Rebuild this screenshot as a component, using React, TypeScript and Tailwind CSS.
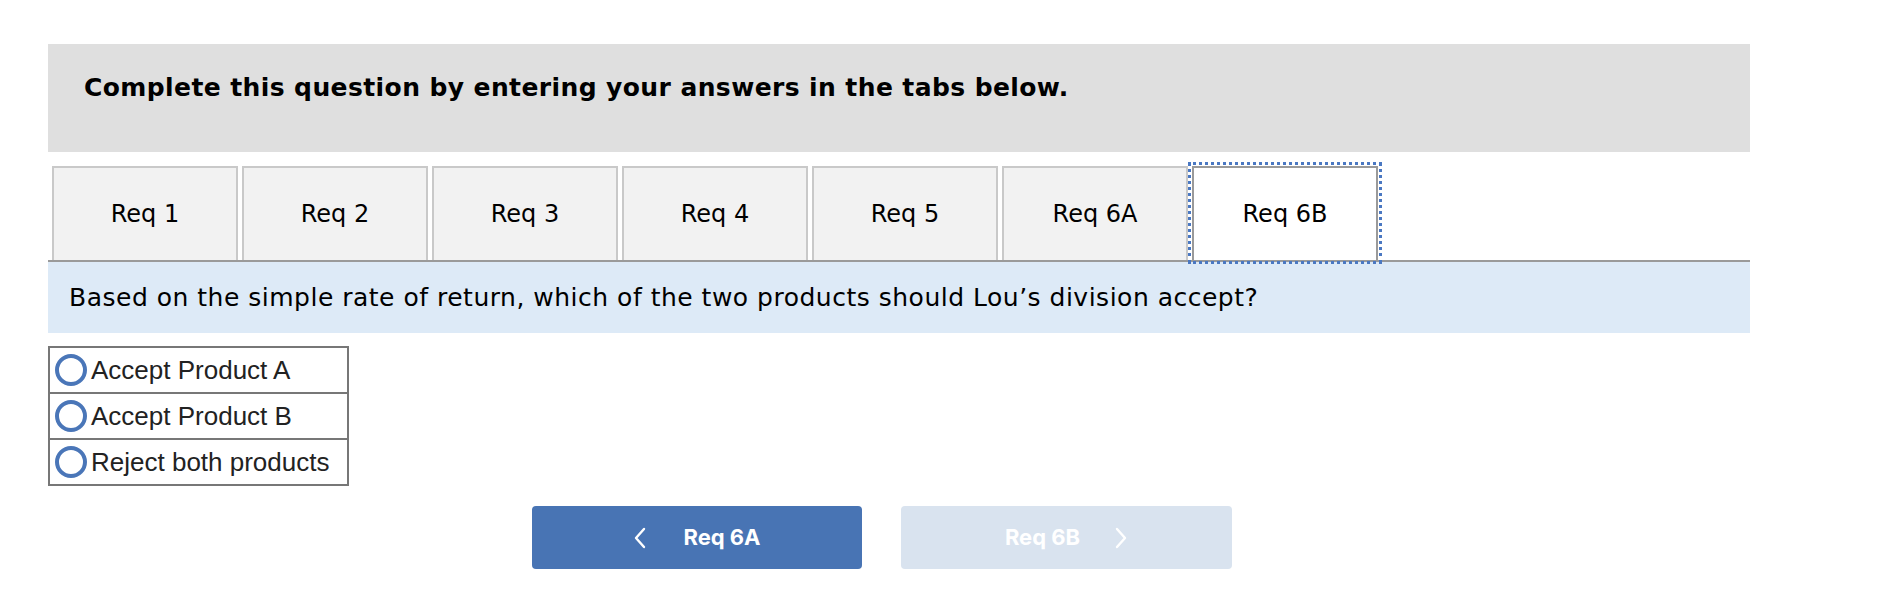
import { useState } from 'react'

const tabs = ['Req 1', 'Req 2', 'Req 3', 'Req 4', 'Req 5', 'Req 6A', 'Req 6B']

const options = ['Accept Product A', 'Accept Product B', 'Reject both products']

export default function App() {
  const [active, setActive] = useState('Req 6B')
  const [choice, setChoice] = useState<string | null>(null)

  return (
    <div className="min-h-[600px] bg-white pt-[44px] px-[48px]" style={{ width: 1892 }}>
      <div className="w-[1702px]">
        {/* Instructions */}
        <div className="h-[108px] bg-[#dfdfdf] pt-[25px] pl-[36px]">
          <p className="text-[25px] font-bold tracking-[0.4px] text-black" style={{ fontFamily: '"DejaVu Sans", Verdana, sans-serif' }}>
            Complete this question by entering your answers in the tabs below.
          </p>
        </div>

        {/* Tabs */}
        <div className="mt-[14px] flex gap-[4px] pl-[4px] border-b-2 border-[#9a9a9a]">
          {tabs.map((t) => (
            <button
              key={t}
              onClick={() => setActive(t)}
              className={`w-[186px] h-[94px] border-2 border-b-0 flex items-center justify-center text-[24px] text-black ${
                active === t
                  ? 'bg-white border-[#9a9a9a] outline-[3px] outline-dotted outline-offset-1 outline-[#4a78c2] relative z-10'
                  : 'bg-[#f2f2f2] border-[#c9c9c9]'
              }`}
              style={{ fontFamily: '"DejaVu Sans", Verdana, sans-serif' }}
            >
              {t}
            </button>
          ))}
        </div>

        {/* Question */}
        <div className="h-[71px] bg-[#ddeaf7] flex items-center pl-[21px]">
          <p className="text-[25px] tracking-[0.5px] text-black" style={{ fontFamily: '"DejaVu Sans", Verdana, sans-serif' }}>
            Based on the simple rate of return, which of the two products should Lou’s division accept?
          </p>
        </div>

        {/* Options */}
        <div className="mt-[13px] w-[301px] border-2 border-[#777777]" style={{ fontFamily: '"Liberation Sans", Arial, sans-serif' }}>
          {options.map((o, i) => (
            <label
              key={o}
              className={`h-[44px] flex items-center pl-[5px] cursor-pointer ${i > 0 ? 'border-t-2 border-[#777777] h-[46px]' : ''}`}
              onClick={() => setChoice(o)}
            >
              <span className="w-[32px] h-[32px] rounded-full border-[4px] border-[#4a76b8] flex items-center justify-center shrink-0">
                {choice === o && <span className="w-[14px] h-[14px] rounded-full bg-[#4a76b8]" />}
              </span>
              <span className="ml-[4px] text-[26px] text-[#222222] leading-none">{o}</span>
            </label>
          ))}
        </div>

        {/* Navigation */}
        <div className="mt-[20px] ml-[484px] flex gap-[39px]" style={{ fontFamily: 'Inter, "Liberation Sans", sans-serif' }}>
          <button
            onClick={() => setActive('Req 6A')}
            className="w-[330px] h-[63px] rounded-[4px] bg-[#4874b4] text-white flex items-center justify-center gap-[36px] text-[22px] font-bold"
          >
            <svg width="14" height="22" viewBox="0 0 14 22" fill="none" stroke="currentColor" strokeWidth="2.4" strokeLinecap="round" strokeLinejoin="round">
              <polyline points="11,2 3,11 11,20" />
            </svg>
            <span>Req 6A</span>
          </button>
          <button
            disabled
            className="w-[331px] h-[63px] rounded-[4px] bg-[#d9e3ef] text-white flex items-center justify-center gap-[34px] text-[22px] font-bold"
          >
            <span>Req 6B</span>
            <svg width="14" height="22" viewBox="0 0 14 22" fill="none" stroke="currentColor" strokeWidth="2.4" strokeLinecap="round" strokeLinejoin="round">
              <polyline points="3,2 11,11 3,20" />
            </svg>
          </button>
        </div>
      </div>
    </div>
  )
}
